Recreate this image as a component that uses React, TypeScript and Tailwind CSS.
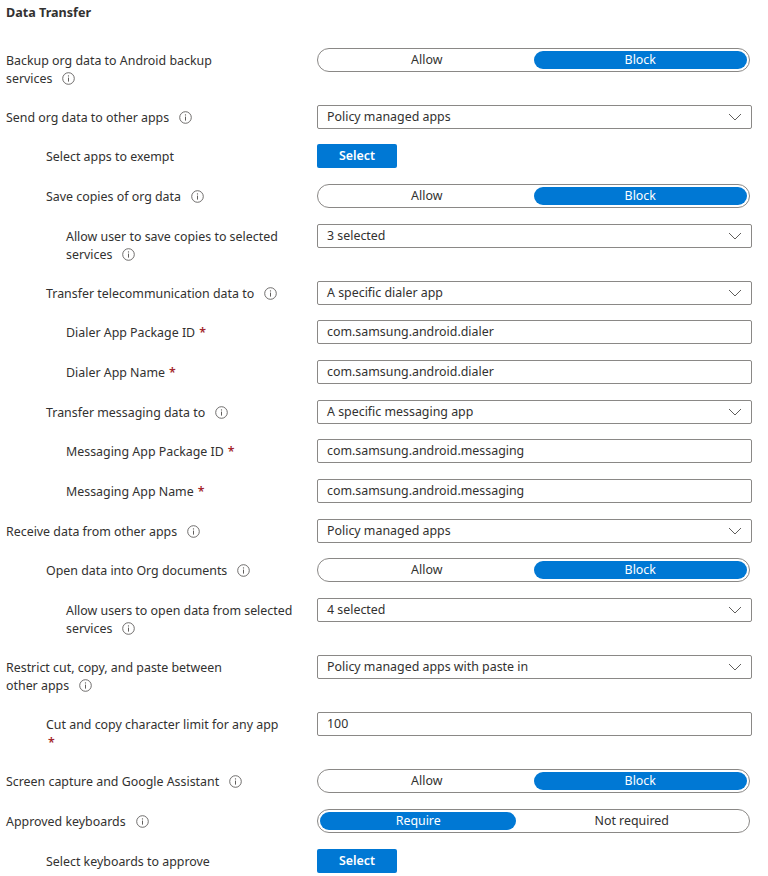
import React from 'react';

type Control =
  | { kind: 'toggle'; options: [string, string]; active: 0 | 1; split?: string }
  | { kind: 'dropdown'; value: string }
  | { kind: 'input'; value: string }
  | { kind: 'button'; label: string };

type Row = {
  level: 0 | 1 | 2;
  lines: string[];
  info?: boolean;
  required?: boolean;
  requiredOwnLine?: boolean;
  control: Control;
};

const rows: Row[] = [
  { level: 0, lines: ['Backup org data to Android backup', 'services'], info: true, control: { kind: 'toggle', options: ['Allow', 'Block'], active: 1 } },
  { level: 0, lines: ['Send org data to other apps'], info: true, control: { kind: 'dropdown', value: 'Policy managed apps' } },
  { level: 1, lines: ['Select apps to exempt'], control: { kind: 'button', label: 'Select' } },
  { level: 1, lines: ['Save copies of org data'], info: true, control: { kind: 'toggle', options: ['Allow', 'Block'], active: 1 } },
  { level: 2, lines: ['Allow user to save copies to selected', 'services'], info: true, control: { kind: 'dropdown', value: '3 selected' } },
  { level: 1, lines: ['Transfer telecommunication data to'], info: true, control: { kind: 'dropdown', value: 'A specific dialer app' } },
  { level: 2, lines: ['Dialer App Package ID'], required: true, control: { kind: 'input', value: 'com.samsung.android.dialer' } },
  { level: 2, lines: ['Dialer App Name'], required: true, control: { kind: 'input', value: 'com.samsung.android.dialer' } },
  { level: 1, lines: ['Transfer messaging data to'], info: true, control: { kind: 'dropdown', value: 'A specific messaging app' } },
  { level: 2, lines: ['Messaging App Package ID'], required: true, control: { kind: 'input', value: 'com.samsung.android.messaging' } },
  { level: 2, lines: ['Messaging App Name'], required: true, control: { kind: 'input', value: 'com.samsung.android.messaging' } },
  { level: 0, lines: ['Receive data from other apps'], info: true, control: { kind: 'dropdown', value: 'Policy managed apps' } },
  { level: 1, lines: ['Open data into Org documents'], info: true, control: { kind: 'toggle', options: ['Allow', 'Block'], active: 1 } },
  { level: 2, lines: ['Allow users to open data from selected', 'services'], info: true, control: { kind: 'dropdown', value: '4 selected' } },
  { level: 0, lines: ['Restrict cut, copy, and paste between', 'other apps'], info: true, control: { kind: 'dropdown', value: 'Policy managed apps with paste in' } },
  { level: 1, lines: ['Cut and copy character limit for any app'], required: true, requiredOwnLine: true, control: { kind: 'input', value: '100' } },
  { level: 0, lines: ['Screen capture and Google Assistant'], info: true, control: { kind: 'toggle', options: ['Allow', 'Block'], active: 1 } },
  { level: 0, lines: ['Approved keyboards'], info: true, control: { kind: 'toggle', options: ['Require', 'Not required'], active: 0, split: 'w-[46%]' } },
  { level: 1, lines: ['Select keyboards to approve'], control: { kind: 'button', label: 'Select' } },
];

const InfoIcon = () => (
  <svg width="13" height="13" viewBox="0 0 13 13" className="ml-[10px] inline-block align-[-2px]" fill="none">
    <circle cx="6.5" cy="6.5" r="5.8" stroke="#605e5c" strokeWidth="0.9" />
    <line x1="6.5" y1="5.6" x2="6.5" y2="9.6" stroke="#605e5c" strokeWidth="1" />
    <circle cx="6.5" cy="3.9" r="0.65" fill="#605e5c" />
  </svg>
);

const Chevron = () => (
  <svg width="14" height="8" viewBox="0 0 14 8" fill="none">
    <path d="M1 1l6 6 6-6" stroke="#605e5c" strokeWidth="1" />
  </svg>
);

const Asterisk = () => <span className="ml-[4px] font-semibold text-[#a4262c]">*</span>;

const Toggle = ({ options, active, split }: { options: [string, string]; active: 0 | 1; split?: string }) => (
  <div className="mr-[2px] flex h-[24px] items-center rounded-full border border-[#8a8886] p-[2px]">
    {options.map((opt, i) => {
      const on = i === active;
      const width = split && i === 0 ? split : 'flex-1';
      return (
        <div
          key={opt}
          className={`${width} flex h-full items-center justify-center rounded-full ${
            on ? 'bg-[#0078d4] text-white' : 'text-[#323130]'
          }`}
        >
          {opt}
        </div>
      );
    })}
  </div>
);

const Field = ({ control }: { control: Control }) => {
  switch (control.kind) {
    case 'toggle':
      return <Toggle options={control.options} active={control.active} split={control.split} />;
    case 'dropdown':
      return (
        <div className="flex h-[24px] items-center justify-between rounded-[2px] border border-[#8a8886] px-[9px] text-[#323130]">
          <span>{control.value}</span>
          <Chevron />
        </div>
      );
    case 'input':
      return (
        <div className="flex h-[24px] items-center rounded-[2px] border border-[#8a8886] px-[9px] text-[#323130]">
          {control.value}
        </div>
      );
    case 'button':
      return (
        <button className="h-[24px] w-[80px] rounded-[2px] bg-[#0078d4] font-semibold text-white">
          {control.label}
        </button>
      );
  }
};

const indent = ['pl-[6px]', 'pl-[46px]', 'pl-[66px]'];

export default function App() {
  return (
    <div
      className="min-h-screen bg-white text-[12.4px] leading-[18px] text-[#323130]"
      style={{ fontFamily: '"Noto Sans", "Open Sans", sans-serif' }}
    >
      <h2 className="pl-[6px] pt-[4px] text-[12.6px] font-bold leading-[18px]">Data Transfer</h2>

      <div className="pt-[10px]">
        {rows.map((row, idx) => (
          <div key={idx} className="mt-[15.65px] flex items-start">
            <div className={`w-[317px] shrink-0 pt-[4px] pb-[1.5px] ${indent[row.level]}`}>
              {row.lines.map((line, li) => {
                const last = li === row.lines.length - 1;
                return (
                  <div key={li}>
                    {line}
                    {last && row.required && !row.requiredOwnLine && <Asterisk />}
                    {last && row.info && <InfoIcon />}
                  </div>
                );
              })}
              {row.requiredOwnLine && (
                <div>
                  <span className="ml-[2px] font-semibold text-[#a4262c]">*</span>
                </div>
              )}
            </div>
            <div className="mr-[16px] flex-1">
              <Field control={row.control} />
            </div>
          </div>
        ))}
      </div>
    </div>
  );
}
